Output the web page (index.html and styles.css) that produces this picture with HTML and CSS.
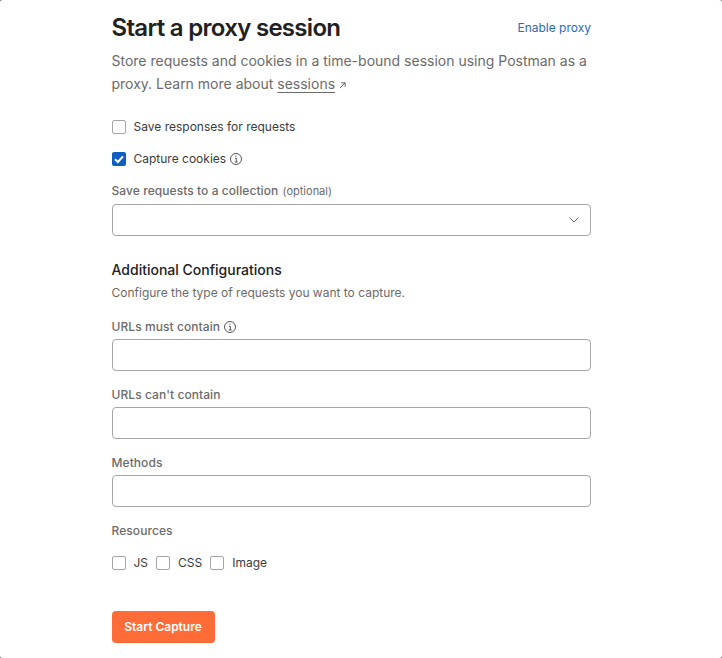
FILE: index.html
```html
<!DOCTYPE html>
<html>
<head>
	<title>Start a proxy session</title>
	<meta name="viewport" content="width=device-width, initial-scale=1">
	<link rel="stylesheet" href="styles.css">
</head>
<body>

	<div id="modal">
	<div id="session">

		<div class="header">
			<h1>Start a proxy session</h1>
			<a class="enable" href="#">Enable proxy</a>
		</div>
		<p class="intro">Store requests and cookies in a time-bound session using Postman as a proxy. Learn more about <a href="#">sessions</a><svg class="arrow" viewBox="0 0 8 8" width="7" height="7"><path d="M1 7L7 1M2.5 1H7V5.5" fill="none" stroke="#5f5f5f" stroke-width="1.1"/></svg></p>

		<label class="check first"><span class="box"></span>Save responses for requests</label>
		<label class="check second">
			<span class="box checked">
				<svg viewBox="0 0 14 14" width="14" height="14"><path d="M3 7.2L5.9 10L11 4.3" fill="none" stroke="#fff" stroke-width="2"/></svg>
			</span>
			Capture cookies
			<svg class="info" viewBox="0 0 12 12" width="12" height="12"><circle cx="6" cy="6" r="5.5" fill="none" stroke="#555"/><path d="M5 5.3H6.3V9M4.8 9H7.7M6 2.6V3.8" fill="none" stroke="#555"/></svg>
		</label>

		<div class="label">Save requests to a collection <span class="optional">(optional)</span></div>
		<div class="field select">
			<svg viewBox="0 0 10 6" width="10" height="6"><path d="M.7.7L5 5L9.3.7" fill="none" stroke="#6b6b6b" stroke-width="1"/></svg>
		</div>

		<h2>Additional Configurations</h2>
		<p class="sub">Configure the type of requests you want to capture.</p>

		<div class="label urls">URLs must contain <svg class="info" viewBox="0 0 12 12" width="12" height="12"><circle cx="6" cy="6" r="5.5" fill="none" stroke="#555"/><path d="M5 5.3H6.3V9M4.8 9H7.7M6 2.6V3.8" fill="none" stroke="#555"/></svg></div>
		<div class="field"></div>

		<div class="label">URLs can't contain</div>
		<div class="field"></div>

		<div class="label">Methods</div>
		<div class="field"></div>

		<div class="label">Resources</div>
		<div class="resources">
			<label class="check"><span class="box"></span>JS</label>
			<label class="check"><span class="box"></span>CSS</label>
			<label class="check"><span class="box"></span>Image</label>
		</div>

		<button id="startButt">Start Capture</button>
	</div>
	</div>

</body>
</html>
```

FILE: styles.css
```css
* {
	box-sizing: border-box;
}

html, body {
	margin: 0;
	height: 100%;
	background-color: #8c8c8c;
}

body {
	font-family: Inter, "Liberation Sans", sans-serif;
	color: #3b3b3b;
	font-size: 12px;
	overflow: hidden;
}

#modal {
	height: 100%;
	background-color: #fff;
	border-radius: 3px;
}

#session {
	width: 479.5px;
	margin-left: 111.5px;
	padding-top: 12px;
}

.header {
	display: flex;
	justify-content: space-between;
	align-items: center;
	height: 32px;
}

h1 {
	margin: 0;
	font-size: 24px;
	line-height: 32px;
	font-weight: 600;
	color: #212121;
	letter-spacing: -0.7px;
}

.enable {
	color: #2a6bb8;
	text-decoration: none;
	margin-bottom: 1px;
}

.intro {
	margin: 5px 0 0;
	font-size: 14px;
	line-height: 23px;
	color: #6b6b6b;
}

.intro a {
	color: #6b6b6b;
	text-underline-offset: 3px;
}

.arrow {
	margin-left: 4px;
}

.check {
	display: flex;
	align-items: center;
	height: 16px;
	line-height: 16px;
}

.first {
	margin-top: 24px;
}

.second {
	margin-top: 16px;
}

.box {
	width: 14px;
	height: 14px;
	margin-right: 8px;
	border: 1px solid #a6a6a6;
	border-radius: 2px;
	background-color: #fff;
}

.checked {
	border: 0;
	background-color: #0f5fc0;
	display: flex;
}

.info {
	margin-left: 4px;
	vertical-align: -2px;
}

.label .info {
	margin-left: 1px;
}

.label {
	margin-top: 16px;
	height: 16px;
	line-height: 16px;
	font-weight: 500;
	letter-spacing: 0.07px;
	color: #6b6b6b;
}

.optional {
	font-size: 11px;
	font-weight: 400;
	margin-left: 1px;
	letter-spacing: 0;
}

.field {
	margin-top: 4px;
	height: 32px;
	border: 1px solid #a6a6a6;
	border-radius: 4px;
	background-color: #fff;
}

.select {
	margin-top: 5px;
	display: flex;
	align-items: center;
	justify-content: flex-end;
	padding-right: 11px;
}

h2 {
	margin: 26px 0 0;
	font-size: 14px;
	line-height: 16px;
	font-weight: 500;
	color: #212121;
}

.sub {
	margin: 7px 0 0;
	line-height: 16px;
	color: #6b6b6b;
}

.urls {
	margin-top: 18px;
}

.resources {
	display: flex;
	gap: 8px;
	margin-top: 16px;
}

#startButt {
	display: block;
	margin-top: 40px;
	width: 103px;
	height: 32px;
	padding: 0 0 1px;
	border: 0;
	border-radius: 4px;
	background-color: #ff6c37;
	color: #fff;
	font-family: inherit;
	font-size: 12px;
	font-weight: 600;
}
```
